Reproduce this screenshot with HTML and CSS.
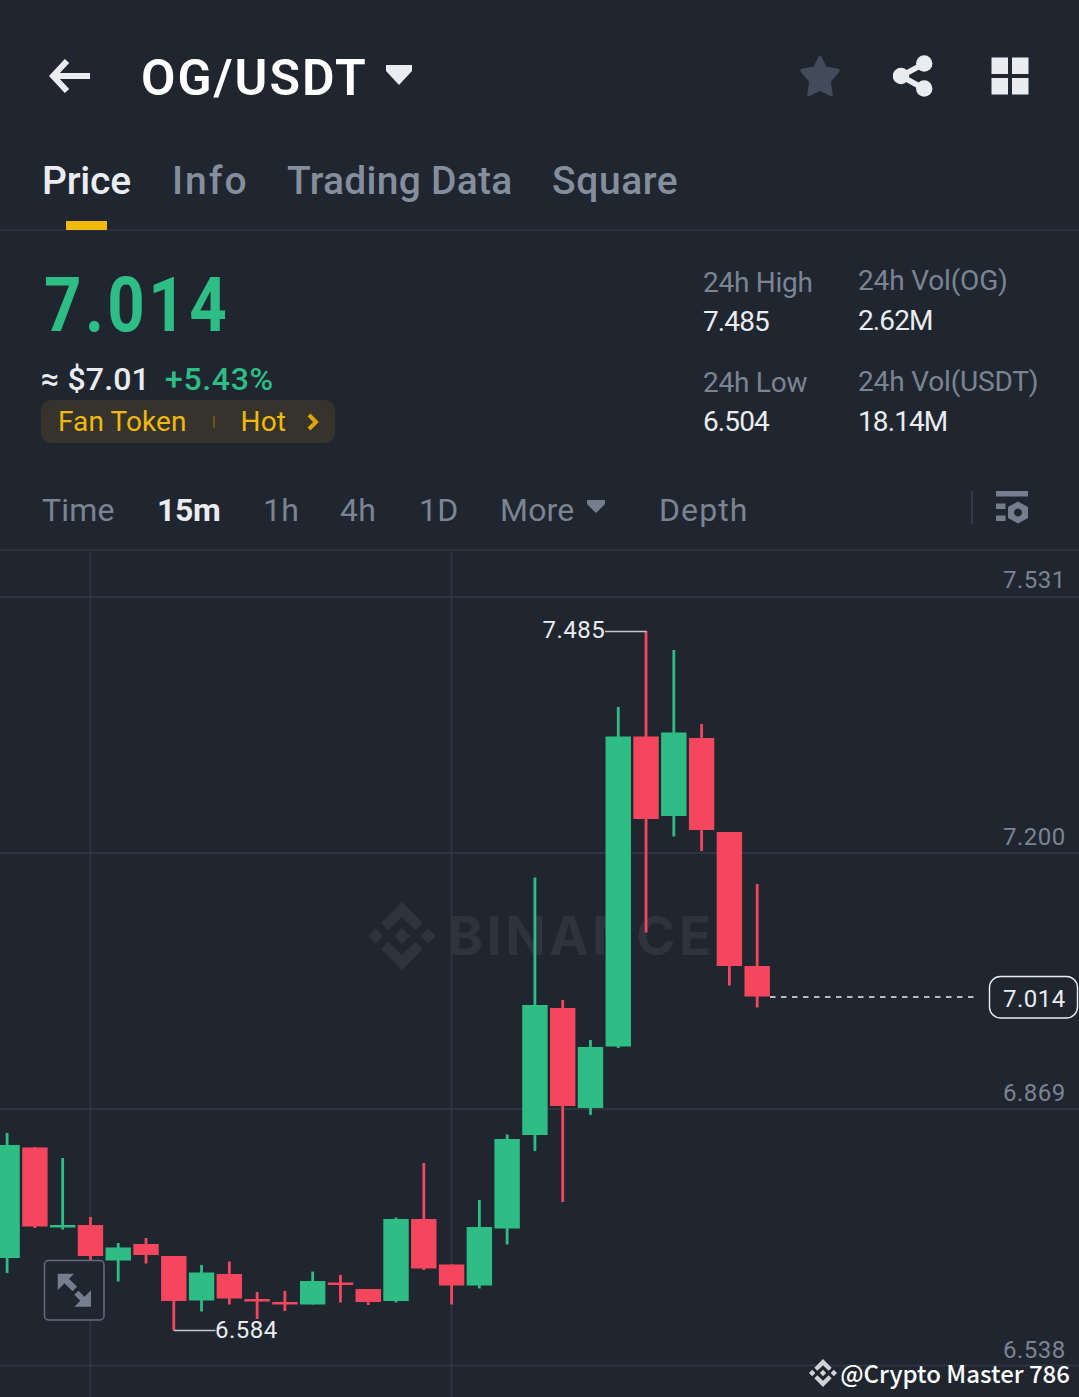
FILE: index.html
```html
<!DOCTYPE html>
<html lang="en">
<head>
	<meta charset="UTF-8">
	<title>OG/USDT</title>
	<link rel="stylesheet" href="styles.css">
</head>
<body>
	<div id="wrap">
		<div class="header">
			<svg class="back" width="42" height="34" viewBox="0 0 42 34">
				<path d="M18 2L4 17l14 15M4 17h37" fill="none" stroke="#eaecef" stroke-width="6"/>
			</svg>
			<h1>OG/USDT</h1>
			<svg class="caret" width="26" height="20" viewBox="0 0 26 20">
				<path d="M0 0h26v6L13 20 0 6z" fill="#eaecef"/>
			</svg>
			<div class="tools">
				<svg width="42" height="42" viewBox="0 0 42 42">
					<path d="M21 2.500l5 10.500 13 2.500-9 10.500 2 13.500-11-5.500-11 5.500 2-13.500-9-10.500L16 13z" fill="#434c5a" stroke="#434c5a" stroke-width="3.500" stroke-linejoin="round"/>
				</svg>
				<svg width="40" height="42" viewBox="0 0 40 42">
					<path d="M31.500 8.500L8 21l23.500 13" fill="none" stroke="#eaecef" stroke-width="5.500"/>
					<g fill="#eaecef">
						<circle cx="8" cy="21" r="8.200"/>
						<circle cx="31.200" cy="8.500" r="8.200"/>
						<circle cx="31.200" cy="33.500" r="8.200"/>
					</g>
				</svg>
				<svg width="38" height="38" viewBox="0 0 38 38">
					<path d="M.5.5h16.500v16.500H.5zM21 .5h16.500v16.500H21zM.5 21h16.500v16.500H.5zM21 21h16.500v16.500H21z" fill="#eaecef"/>
				</svg>
			</div>
		</div>
		<ul class="tabs">
			<li class="active">Price</li>
			<li class="info">Info</li>
			<li class="trading">Trading Data</li>
			<li>Square</li>
		</ul>
		<div class="summary">
			<div class="quote">
				<div class="last">7.014</div>
				<div class="fiat">≈ $7.01 <span>+5.43%</span></div>
				<div class="tag">
					<span>Fan Token</span>
					<i></i>
					<span>Hot</span>
					<svg width="12" height="18" viewBox="0 0 12 18">
						<path d="M2 2l7 7-7 7" fill="none" stroke="#e0a50a" stroke-width="4"/>
					</svg>
				</div>
			</div>
			<dl class="range">
				<dt>24h High</dt>
				<dd>7.485</dd>
				<dt>24h Low</dt>
				<dd>6.504</dd>
			</dl>
			<dl class="volume">
				<dt>24h Vol(OG)</dt>
				<dd>2.62M</dd>
				<dt>24h Vol(USDT)</dt>
				<dd>18.14M</dd>
			</dl>
		</div>
		<div class="intervals">
			<span>Time</span>
			<span class="active">15m</span>
			<span>1h</span>
			<span>4h</span>
			<span>1D</span>
			<span class="more">More
				<svg width="18" height="13" viewBox="0 0 18 13"><path d="M0 0h18v4l-9 9-9-9z" fill="#757e8e"/></svg>
			</span>
			<span class="depth">Depth</span>
			<i></i>
			<svg class="setting" width="32" height="34" viewBox="0 0 32 34">
				<path d="M0 1h32v5.500H0zM0 13.500h9.500v5.500H0zM0 25.500h9.500V31H0z" fill="#757e8e"/>
				<path fill-rule="evenodd" d="M22 11.500l10 5.500v11l-10 5.500-10-5.500V17zM22 18.500a4 4 0 1 0 .01 0z" fill="#757e8e"/>
			</svg>
		</div>
		<div class="chart">
			<svg width="1079" height="846" viewBox="0 551 1079 846">
				<defs>
					<symbol id="logo" viewBox="0 0 68 68">
						<path d="M34 0l21 21-7.300 7.300L34 15 20.300 28.300 13 21zM34 68l21-21-7.300-7.300L34 53 20.300 39.700 13 47zM34 26.300l7.700 7.700-7.700 7.700-7.700-7.700zM7.700 26.300l7.700 7.700-7.700 7.700L0 34zM60.300 26.300L68 34l-7.700 7.700-7.700-7.700z"/>
					</symbol>
				</defs>
				<path class="grid" d="M0 597h1079M0 853h1079M0 1109h1079M0 1365.500h1079M90.500 552v845M451.500 552v845"/>
				<g class="watermark">
					<use href="#logo" x="368" y="902" width="68" height="68"/>
					<text x="448" y="955">BINANCE</text>
				</g>
				<g id="candles"></g>
				<path class="pointer" d="M605 631.500h41.500M174 1330.500h41.500"/>
				<path class="current" d="M770 997h205"/>
				<rect class="pill" x="989.500" y="976.500" width="88" height="41.500" rx="11"/>
				<g class="mark">
					<text x="542.500" y="638">7.485</text>
					<text x="215" y="1337.500">6.584</text>
					<text x="1003" y="1007">7.014</text>
				</g>
				<g class="axis">
					<text x="1003" y="588">7.531</text>
					<text x="1003" y="845">7.200</text>
					<text x="1003" y="1101">6.869</text>
					<text x="1003" y="1357.500">6.538</text>
				</g>
				<g class="expand">
					<rect x="44.500" y="1260.500" width="59.500" height="59.500" rx="4"/>
					<path d="M57.700 1273.700H74l-5 5 8 8-4.500 4.500-8-8-6.800 7zM91 1306.700H74.300l6-6-6-6 4.200-4 6 6 6.500-6.400z"/>
				</g>
			</svg>
			<div class="author">
				<svg width="28" height="28"><use href="#logo"/></svg>
				<span>@Crypto Master 786</span>
			</div>
		</div>
	</div>
	<script src="chart.js"></script>
</body>
</html>
```
FILE: styles.css
```css
body,ul,h1,dl,dd{margin:0;padding:0;}
ul{list-style:none;}
body{
	background-color:#202630;
	color:#eaecef;
	font-family:Roboto,"Liberation Sans",sans-serif;
}
svg{
	display:block;
	flex:none;
}
#wrap{
	width:1079px;
	height:1397px;
	overflow:hidden;
}
.header{
	display:flex;
	align-items:center;
	box-sizing:border-box;
	height:150px;
	padding:1px 50px 0 49px;
}
h1{
	width:245px;
	margin-left:50px;
	padding-top:4px;
	color:#fff;
	font-size:50px;
	font-weight:600;
	letter-spacing:2px;
	white-space:nowrap;
}
.caret{
	margin-top:-1px;
}
.tools{
	display:flex;
	align-items:center;
	margin-left:auto;
}
.tools svg + svg{
	margin-left:52px;
}
.tools svg:last-child{
	margin-left:58px;
}
.tabs{
	display:grid;
	grid-template-columns:130px 115px 265px 150px;
	height:79px;
	padding-left:42px;
	border-bottom:2px solid #2a303b;
	color:#848e9c;
	font-size:39px;
	font-weight:500;
	line-height:62px;
	white-space:nowrap;
}
.tabs li{
	position:relative;
	letter-spacing:.6px;
}
.tabs li.active{
	color:#eaecef;
	letter-spacing:-.2px;
}
.tabs li.active:after{
	content:"";
	position:absolute;
	left:24px;
	bottom:-1px;
	width:41px;
	height:9px;
	background-color:#f0b90b;
}
.tabs .info{
	letter-spacing:2px;
}
.tabs .trading{
	letter-spacing:.25px;
}
.summary{
	display:grid;
	grid-template-columns:662px 155px 1fr;
	height:239px;
	padding-left:41px;
}
.quote{
	padding-top:29px;
}
.last{
	width:240px;
	margin-left:3px;
	color:#2ebd85;
	font-size:76px;
	font-weight:700;
	line-height:90px;
	letter-spacing:4px;
	transform:scaleX(.86);
	transform-origin:left;
}
.fiat{
	height:50px;
	font-size:32px;
	font-weight:500;
	line-height:58px;
	letter-spacing:.15px;
}
.fiat span{
	margin-left:7px;
	color:#2ebd85;
	letter-spacing:.65px;
}
.tag{
	display:flex;
	align-items:center;
	box-sizing:border-box;
	width:294px;
	height:43px;
	padding-left:17px;
	border-radius:10px;
	background-color:#35332c;
	color:#f0b90b;
	font-size:28px;
	letter-spacing:.1px;
}
.tag i{
	width:2px;
	height:12px;
	margin:0 26px;
	background-color:#66541b;
}
.tag svg{
	margin-left:21px;
}
dl{
	padding-top:32px;
	font-size:28px;
	line-height:39px;
}
dt{
	color:#7b8493;
	letter-spacing:-.25px;
}
dd{
	color:#eaecef;
	letter-spacing:-.9px;
}
dd + dt{
	margin-top:22px;
}
.volume{
	padding-top:30px;
}
.volume dt{
	line-height:40px;
	letter-spacing:-.17px;
}
.intervals{
	display:grid;
	grid-template-columns:115px 106px 77px 79px 81px 159px 312px 25px 32px;
	align-items:center;
	box-sizing:border-box;
	height:81px;
	padding:1px 0 1px 42px;
	border-bottom:2px solid #2b303b;
	color:#7b8493;
	font-size:32px;
	letter-spacing:.2px;
	white-space:nowrap;
}
.intervals .active{
	color:#eaecef;
	font-weight:700;
	letter-spacing:-.3px;
}
.intervals .depth{
	letter-spacing:1.1px;
}
.intervals .more{
	display:flex;
	align-items:center;
}
.more svg{
	margin:-6px 0 0 12px;
}
.intervals i{
	width:2px;
	height:33px;
	margin-top:-5px;
	background-color:#343a45;
}
.setting{
	margin-top:-5px;
}
.chart{
	position:relative;
	height:846px;
}
.grid{
	fill:none;
	stroke:#2f3540;
	stroke-width:1.8px;
}
.watermark{
	fill:#2f333e;
	font-family:Inter,sans-serif;
	font-size:53px;
	font-weight:700;
	letter-spacing:3.6px;
}
.up{
	fill:#2ebd85;
	stroke:#2ebd85;
}
.down{
	fill:#f6465d;
	stroke:#f6465d;
}
#candles rect{
	stroke:none;
}
#candles line{
	stroke-width:2.8px;
}
.pointer{
	fill:none;
	stroke:#c3c6ca;
	stroke-width:1.5px;
}
.current{
	fill:none;
	stroke:#b7bac0;
	stroke-width:1.8px;
	stroke-dasharray:5.500px 5.500px;
}
.pill{
	fill:#202630;
	stroke:#eaecef;
	stroke-width:1.4px;
}
.mark,.axis{
	font-size:24px;
	letter-spacing:.5px;
	fill:#eaecef;
}
.axis{
	fill:#7b8493;
}
.expand{
	fill:#757e8e;
}
.expand rect{
	fill:#202630;
	stroke:#646c7a;
	stroke-width:1.5px;
}
.author{
	display:flex;
	align-items:center;
	position:absolute;
	right:9px;
	bottom:11px;
	height:26px;
	color:#fff;
	fill:#d2d3d5;
	font:500 24px/26px "Noto Sans CJK SC",sans-serif;
}
.author span{
	margin-left:3px;
	white-space:nowrap;
}
```
FILE: chart.js
```js
//direction, high, body top, body bottom, low
var data = [
		["up", 1133, 1145, 1258, 1273],
		["down", 1147, 1147.5, 1226.5, 1228],
		["up", 1158, 1225, 1227.5, 1229.5],
		["down", 1217, 1225, 1256, 1261],
		["up", 1243, 1247.5, 1260.5, 1281.5],
		["down", 1238, 1244, 1255, 1263.5],
		["down", 1256, 1256, 1301, 1330.5],
		["up", 1265, 1272.5, 1300.5, 1311.5],
		["down", 1261.5, 1274, 1298.5, 1304.5],
		["down", 1292, 1299, 1301.5, 1319],
		["down", 1291, 1302, 1304.5, 1311],
		["up", 1271.5, 1281, 1304.5, 1304.5],
		["down", 1275, 1282.5, 1285, 1302.5],
		["down", 1289, 1289, 1302, 1305],
		["up", 1217.5, 1219, 1301, 1302.5],
		["down", 1163, 1219, 1268.5, 1270],
		["down", 1264.5, 1264.5, 1285.5, 1304.5],
		["up", 1200, 1227, 1285.5, 1288.5],
		["up", 1134.5, 1139, 1228.5, 1244.5],
		["up", 877.5, 1005, 1135, 1151],
		["down", 1000, 1008, 1106, 1202],
		["up", 1040, 1047, 1108, 1115],
		["up", 707, 736.5, 1046.5, 1048],
		["down", 631, 736.5, 819, 932.5],
		["up", 650, 732.5, 816, 836.5],
		["down", 724, 738, 830, 851],
		["down", 832, 832, 966, 985.5],
		["down", 884, 966, 996.5, 1007.5]
	],
	step = 27.78,
	width = 25.4,
	str = "";

for(var i = 0; i < data.length; i ++){
	var d = data[i],
		x = 7.1 + i * step;
	str += "<g class='" + d[0] + "'><line x1='" + x + "' x2='" + x + "' y1='" + d[1] + "' y2='" + d[4] + "'/>";
	str += "<rect x='" + (x - width / 2) + "' y='" + d[2] + "' width='" + width + "' height='" + (d[3] - d[2]) + "'/></g>";
}
document.getElementById("candles").innerHTML = str;
```
